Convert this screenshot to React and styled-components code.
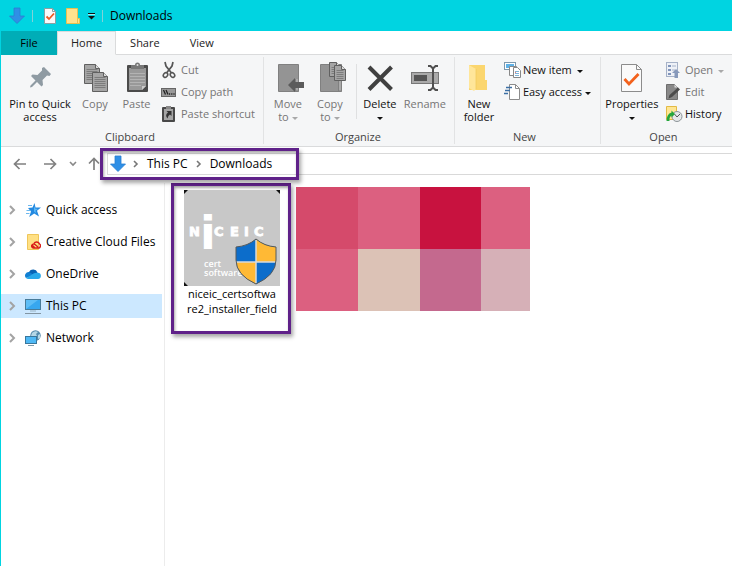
import React, { useState } from 'react';
import styled, { createGlobalStyle } from 'styled-components';

const GlobalStyle = createGlobalStyle`
    * {
        box-sizing: border-box;
    }

    body {
        margin: 0;
        background: #fff;
        color: #000;
        font-family: "Open Sans", "Noto Sans", sans-serif;
        font-size: 12px;
        line-height: 16px;
    }

    button {
        margin: 0;
        padding: 0;
        border: 0;
        background: none;
        color: inherit;
        font: inherit;
    }

    svg {
        display: block;
        flex: none;
    }
`;

const Window = styled.div`
    min-height: 100vh;
    display: flex;
    flex-direction: column;
    border-left: 1px solid #00d4e1;
    overflow: hidden;
`;

const TitleBar = styled.header`
    height: 31px;
    display: flex;
    align-items: center;
    padding-left: 8px;
    background: #00d4e1;
`;

const TitleDivider = styled.span`
    width: 1px;
    height: 12px;
    margin: 0 ${(p) => p.$after}px 0 7px;
    background: #80d2d8;
`;

const QuickButton = styled.button`
    margin-right: ${(p) => p.$gap || 0}px;
`;

const Title = styled.h1`
    margin: 0;
    font-size: 12px;
    font-weight: 400;
`;

const TabBar = styled.div`
    height: 24px;
    display: flex;
    font-size: 11px;
    border-bottom: 1px solid #dadbdc;
`;

const Tab = styled.button`
    height: 24px;
    min-width: 56px;
    padding: 0 13px;
    color: #222;
    border: 1px solid transparent;
    border-top: 0;
    ${(p) => p.$file && 'background: #00adb7; color: #000;'}
    ${(p) => p.$active && `
        background: #f5f6f7;
        border-color: #dadbdc;
        border-bottom-color: #f5f6f7;
        border-top: 1px solid #dadbdc;
    `}
`;

const Ribbon = styled.div`
    display: flex;
    padding: 2px 0;
    font-size: 11px;
    background: #f5f6f7;
    border-bottom: 1px solid #dadbdc;
`;

const Group = styled.section`
    flex: none;
    display: flex;
    flex-direction: column;
    padding: 0 ${(p) => p.$right}px 0 ${(p) => p.$left}px;
    border-right: ${(p) => (p.$last ? '0' : '1px solid #e2e3e4')};
`;

const GroupBody = styled.div`
    height: 72px;
    display: flex;
`;

const GroupLabel = styled.h2`
    margin: 0;
    color: #444;
    font-size: 11px;
    font-weight: 400;
    line-height: 15px;
    text-align: center;
`;

const BigButton = styled.button`
    width: ${(p) => p.$width}px;
    display: flex;
    flex-direction: column;
    align-items: center;
    gap: 3px;
    padding-top: 5px;
    line-height: 13px;
    white-space: nowrap;
    color: ${(p) => (p.disabled ? '#757575' : '#111')};
`;

const InnerDivider = styled.span`
    width: 1px;
    height: 55px;
    margin: 7px 2px 0 5px;
    background: #dfe0e1;
`;

const SmallColumn = styled.div`
    display: flex;
    flex-direction: column;
    padding-top: 2px;
    margin-left: ${(p) => p.$left}px;
`;

const SmallButton = styled.button`
    height: 22px;
    display: flex;
    align-items: center;
    gap: ${(p) => p.$gap || 4}px;
    white-space: nowrap;
    color: ${(p) => (p.disabled ? '#757575' : '#111')};
`;

const Caret = styled.span`
    display: inline-block;
    margin-left: ${(p) => p.$left || 0}px;
    vertical-align: middle;
    border: 3px solid transparent;
    border-top-color: currentColor;
    border-bottom: 0;
    opacity: ${(p) => (p.$dim ? 0.6 : 1)};
`;

const AddressRow = styled.div`
    height: 36px;
    display: flex;
    align-items: center;
    padding: 0 0 2px 12px;
`;

const NavButton = styled.button`
    margin-right: ${(p) => p.$gap}px;
`;

const AddressBar = styled.div`
    flex: 1;
    height: 22px;
    display: flex;
    border: 1px solid #d9d9d9;
    border-right: 0;
`;

const Breadcrumbs = styled.nav`
    position: relative;
    min-width: 185px;
    display: flex;
    align-items: center;
    padding-left: 2px;

    &::after {
        content: "";
        position: absolute;
        inset: -6px -6px -6px -8px;
        border: 3px solid #5f2189;
        box-shadow: 2px 3px 4px rgba(0, 0, 0, 0.35), inset 1px 2px 3px rgba(0, 0, 0, 0.35);
        pointer-events: none;
    }
`;

const Crumb = styled.button`
    margin: 0 8px;
`;

const CrumbToggle = styled.button`
    margin-left: 7px;
`;

const Main = styled.div`
    flex: 1;
    display: flex;
`;

const Sidebar = styled.nav`
    width: 164px;
    flex: none;
    display: flex;
    flex-direction: column;
    gap: 8px;
    padding: 15px 2px 15px 0;
    border-right: 1px solid #ececec;
`;

const SideItem = styled.button`
    height: 24px;
    display: flex;
    align-items: center;
    padding-left: 7px;
    white-space: nowrap;
    background: ${(p) => (p.$active ? '#cce8ff' : 'transparent')};

    span {
        margin-left: 5px;
    }
`;

const SideIcon = styled.svg`
    margin-left: 9px;
`;

const Files = styled.main`
    flex: 1;
    display: flex;
    align-items: flex-start;
    gap: 5px;
    padding-left: 6px;
`;

const FileTile = styled.button`
    width: 120px;
    min-height: 151px;
    flex: none;
    display: flex;
    flex-direction: column;
    align-items: center;
    padding: 4px 8px 4px 10px;
    font-size: 11px;
    line-height: 15px;
    border: 3px solid #5f2189;
    box-shadow: 2px 3px 4px rgba(0, 0, 0, 0.35), inset 1px 2px 3px rgba(0, 0, 0, 0.35);
`;

const Mosaic = styled.div`
    display: grid;
    grid-template-columns: 62px 62px 61px 49px;
    grid-auto-rows: 62px;
    margin-top: 4px;
`;

const Swatch = styled.div`
    background: ${(p) => p.$color};
`;

const DownArrow = () => (
    <svg width="16" height="18" viewBox="0 0 16 18">
        <path d="M5 1h6v8h4.500L8 16.500.500 9H5z" fill="#2f8fe6" stroke="#2a7fd0" strokeWidth=".8" />
    </svg>
);

const SmallDoc = () => (
    <svg width="12" height="16" viewBox="0 0 12 16">
        <path d="M.5.5h8l3 3v12H.5z" fill="#fafafa" stroke="#8ba0a3" />
        <path d="M8.500.5v3h3" fill="none" stroke="#8ba0a3" />
        <path d="M2.500 8.500l2.500 2.500 5-5.500" fill="none" stroke="#ee5a24" strokeWidth="1.800" />
    </svg>
);

const SmallFolder = () => (
    <svg width="14" height="16" viewBox="0 0 14 16">
        <path d="M.5.5h11v10h2v5H.5z" fill="#ffe28d" stroke="#e7c04f" />
        <path d="M11.500 10.500v5" stroke="#e7c04f" />
    </svg>
);

const Customize = () => (
    <svg width="8" height="8" viewBox="0 0 8 8">
        <path d="M1 1.500h7" stroke="#111" />
        <path d="M1 2.500h7" stroke="#fff" opacity=".6" />
        <path d="M1 4h7L4.500 7.500z" fill="#111" />
    </svg>
);

const PinIcon = () => (
    <svg width="32" height="32" viewBox="0 0 32 32">
        <path d="M18 6l2-1 7 7-1.500 2-2.500-.5-4.500 4.500.5 5-1.500 1.500-4.500-4.500L8 25l-2 .5.5-2 5-5L7 14l1.500-1.500 5 .5L18 8.500z" fill="#8f9ba3" />
    </svg>
);

const Page = ({ x, y, w = 15, h = 19 }) => (
    <g transform={`translate(${x} ${y})`}>
        <path d={`M.5.5h${w - 5}l4 4v${h - 5}H.5z`} fill="#a5a5a5" stroke="#606060" />
        <path d={`M${w - 4.5}.5v4h4`} fill="#ddd" stroke="#606060" />
        {[5, 7, 9, 11, 13, 15].filter((n) => n < h - 2).map((n) => (
            <path key={n} d={`M2.500 ${n + 0.5}h${w - 5}`} stroke="#7c7c7c" />
        ))}
    </g>
);

const CopyIcon = () => (
    <svg width="32" height="32" viewBox="0 0 32 32">
        <Page x={5} y={2} w={16} h={20} />
        <Page x={13} y={10} w={16} h={20} />
    </svg>
);

const PasteIcon = () => (
    <svg width="32" height="32" viewBox="0 0 32 32">
        <rect x="6" y="3" width="21" height="27" rx="1" fill="#4b4b4b" />
        <path d="M8 6h17v18l-4 4H8z" fill="#999" />
        <path d="M25 24h-4v4z" fill="#ccc" />
        <path d="M9 11.500h15M9 14.500h15M9 17.500h15M9 20.500h15M9 23.500h11" stroke="#b3b3b3" />
        <path d="M10 3h4a2.500 2.500 0 0 1 5 0h4v4H10z" fill="#777" />
        <circle cx="16.500" cy="3" r="1" fill="#ddd" />
    </svg>
);

const CutIcon = () => (
    <svg width="16" height="18" viewBox="0 0 16 18" fill="none" stroke="#555">
        <path d="M4 1l1 4 5.500 7M12 1l-1 4-5.500 7" strokeWidth="1.700" />
        <ellipse cx="4.500" cy="14" rx="2" ry="2.500" strokeWidth="1.600" transform="rotate(35 4.500 14)" />
        <ellipse cx="11.500" cy="14" rx="2" ry="2.500" strokeWidth="1.600" transform="rotate(-35 11.500 14)" />
    </svg>
);

const CopyPathIcon = () => (
    <svg width="16" height="16" viewBox="0 0 16 16">
        <rect x=".5" y="4.500" width="14" height="8" fill="#999" stroke="#666" />
        <path d="M2.500 6l2 4.500M5 6l2 4.500" stroke="#222" strokeWidth="1.300" />
        <path d="M8 10h1.200M10.200 10h1.200M12.400 10h1.200" stroke="#222" strokeWidth="1.300" />
    </svg>
);

const PasteShortcutIcon = () => (
    <svg width="16" height="16" viewBox="0 0 16 16">
        <rect x="1" y="1" width="13" height="15" rx="1" fill="#484848" />
        <rect x="3" y="3" width="9" height="11" fill="#a5a5a5" />
        <rect x="5" y="0" width="5" height="3" fill="#888" />
        <path d="M5.500 5h5v5L9 8.500q-2 1-2.500 4Q3.500 9 7 6.500z" fill="#333" />
    </svg>
);

const MoveIcon = () => (
    <svg width="32" height="32" viewBox="0 0 32 32">
        <path d="M6.500 2.500h20v27h-20z" fill="#949494" stroke="#808080" />
        <path d="M23.500 17v12h3V17" fill="#aaa" stroke="#808080" />
        <path d="M16 23l7-7v4h9v6h-9v4z" fill="#5b5b5b" />
    </svg>
);

const CopyToIcon = () => (
    <svg width="32" height="32" viewBox="0 0 32 32">
        <path d="M6.500 2.500h21v27h-21z" fill="#949494" stroke="#808080" />
        <path d="M24.500 17v12h3V17" fill="#aaa" stroke="#808080" />
        <Page x={15} y={0} w={12} h={15} />
        <Page x={20} y={3} w={12} h={16} />
    </svg>
);

const DeleteIcon = () => (
    <svg width="32" height="32" viewBox="0 0 32 32">
        <path d="M5 5l22.500 22.500M27.500 5L5 27.500" stroke="#404040" strokeWidth="4" />
    </svg>
);

const RenameIcon = () => (
    <svg width="32" height="32" viewBox="0 0 32 32">
        <rect x="2.500" y="10.500" width="27" height="11" fill="#aaa" stroke="#777" />
        <rect x="5" y="13" width="13" height="6" fill="#555" />
        <path d="M19 4h2.500L24 6.500 26.500 4H29M19 28h2.500l2.500-2.500 2.500 2.500H29M24 6v20" fill="none" stroke="#505050" strokeWidth="2" />
    </svg>
);

const NewFolderIcon = () => (
    <svg width="32" height="32" viewBox="0 0 32 32">
        <path d="M6 3h16v15h2v10H6z" fill="#fbd66f" />
        <path d="M6 3l7 4v20l-2 2-5-3z" fill="#ffe69a" />
        <path d="M13 7v20" stroke="#f0c85a" strokeWidth=".7" />
    </svg>
);

const NewItemIcon = () => (
    <svg width="17" height="16" viewBox="0 0 17 16">
        <rect x=".5" y=".5" width="11" height="7" fill="#fff" stroke="#7e98ac" />
        <rect x="2" y="2" width="8" height="4" fill="#5fb2e8" />
        <path d="M5.500 4.500h7v9h-7z" fill="#fff" stroke="#888" />
        <path d="M9.500 5.500h4l3 3v7h-7z" fill="#fff" stroke="#888" />
        <path d="M11 9.500h4M11 11.500h4M11 13.500h4" stroke="#7fb3d8" />
        <path d="M11 10.500h1" stroke="#e77" />
    </svg>
);

const EasyAccessIcon = () => (
    <svg width="17" height="16" viewBox="0 0 17 16">
        <path d="M5.500.5h6l4 4v11h-10z" fill="#fff" stroke="#8c8c8c" />
        <path d="M11.500.5v4h4" fill="none" stroke="#8c8c8c" />
        <path d="M2 3.500h6M1 6.500h5M0 9.500h4" stroke="#3c6fa5" strokeWidth="1.400" />
    </svg>
);

const PropertiesIcon = () => (
    <svg width="32" height="32" viewBox="0 0 32 32">
        <path d="M5.500 2.500h15l5 5v22h-20z" fill="#fafafa" stroke="#8c8c8c" />
        <path d="M20.500 2.500v5h5" fill="none" stroke="#8c8c8c" />
        <path d="M8.500 17l4.500 5 9.500-10" fill="none" stroke="#f3621d" strokeWidth="2.800" />
    </svg>
);

const OpenIcon = () => (
    <svg width="16" height="16" viewBox="0 0 16 16">
        <rect x="1.500" y=".5" width="11" height="14" fill="#eef1f7" stroke="#a6b2c8" />
        <path d="M3 3h3v2H3zM3 7h3v2H3zM3 11h3v2H3z" fill="#8094bb" />
        <path d="M7 4h4M7 8h3" stroke="#a6b2c8" />
        <path d="M11 7l4 4h-2v5H9.500v-5H7z" fill="#8799bb" />
    </svg>
);

const EditIcon = () => (
    <svg width="16" height="16" viewBox="0 0 16 16">
        <path d="M1.500.5h8l3 3v12h-11z" fill="#888" stroke="#6e6e6e" />
        <path d="M9.500.5v3h3z" fill="#ddd" />
        <path d="M3.500 14.500l1-3.500 8.500-7.500 2 2L7 13z" fill="#4b4b4b" />
    </svg>
);

const HistoryIcon = () => (
    <svg width="18" height="16" viewBox="0 0 18 16">
        <path d="M1.500.5h10v13h-10z" fill="#ffe693" stroke="#e3ba45" />
        <circle cx="12" cy="10.500" r="5" fill="#e5e8ea" stroke="#8c9397" />
        <path d="M9.500 8l2.500 3 3-3" stroke="#555" fill="none" />
        <path d="M1.500 15q0-7 5-8.500V4.500L10 8 6.500 11.500V9.500Q4 11 4.500 15z" fill="#25a63b" />
    </svg>
);

const BackIcon = ({ forward }) => (
    <svg width="14" height="12" viewBox="0 0 14 12" fill="none" stroke="#808080" strokeWidth="1.700">
        <path d={forward ? 'M1 6h11M7.500 1l5 5-5 5' : 'M13 6H2M6.500 1l-5 5 5 5'} />
    </svg>
);

const RecentIcon = () => (
    <svg width="8" height="6" viewBox="0 0 8 6" fill="none" stroke="#888" strokeWidth="1.600">
        <path d="M1 1l3 3 3-3" />
    </svg>
);

const UpIcon = () => (
    <svg width="12" height="14" viewBox="0 0 12 14" fill="none" stroke="#808080" strokeWidth="1.700">
        <path d="M6 13V2M1 6.500l5-5 5 5" />
    </svg>
);

const Chevron = ({ large }) => (
    <svg width={large ? 8 : 6} height={large ? 10 : 8} viewBox={large ? '-1 -1 8 10' : '0 0 6 8'} fill="none">
        <path
            d={large ? 'M1 0l4 4-4 4' : 'M1 1l3 3-3 3'}
            stroke={large ? '#a3a3a3' : '#777'}
            strokeWidth={large ? 2 : 1.6}
        />
    </svg>
);

const StarArt = () => (
    <>
        <path d="M9.500 1l1 4.500H16l-4 3.200 2 5.800-4.800-3-5 3.500 1.800-5.500L3 6l4.500-.5z" fill="#2389e0" />
        <path d="M9 4l1 2.500 3 .5-2.500 1.500L11 11 9 9.500z" fill="#5cb8f7" />
        <path d="M3 3.500h4M1.500 8.500h4M1 11.500h3.500" stroke="#6cb8ef" />
    </>
);

const CreativeCloudArt = () => (
    <>
        <path d="M2.500.5h11v15h-11z" fill="#ffe084" stroke="#efc65a" />
        <g transform="translate(1)">
            <path d="M8.500 13.500l-2-2M13 14H8a2 2 0 1 1 1-3.500l3 2.500M8 9.500a3 3 0 0 1 5.500.5 2.200 2.200 0 0 1-1.500 4" fill="none" stroke="#d91e18" strokeWidth="1.500" />
        </g>
    </>
);

const OneDriveArt = () => (
    <>
        <path d="M4 6a4.700 4.700 0 0 1 8.500.5l-2 4H3z" fill="#0863b5" />
        <path d="M4 6a3.600 3.600 0 0 0-3 6L9 9z" fill="#127fd2" />
        <path d="M1 12q4-2 7.500-4.500 1.500-1 4-.8a3.100 3.100 0 0 1 .5 6.200H3.500Q2 13 1 12z" fill="#28a8ea" />
    </>
);

const ThisPcArt = () => (
    <>
        <rect x=".5" y="1.500" width="15" height="10" fill="#5dbdf6" stroke="#487b99" />
        <path d="M1 11L13 2h2v9z" fill="#37a7ef" />
        <path d="M5 13h6" stroke="#9ab3c3" />
        <path d="M0 15.500h16" stroke="#8295a3" />
    </>
);

const NetworkArt = () => (
    <>
        <circle cx="10.500" cy="5.500" r="5.200" fill="#548aab" />
        <path d="M7 3q3-3 6-1l-2 2 1 2-3 2-3-2zM13 5l2-1v4l-2 1z" fill="#b5d7e6" />
        <rect x=".5" y="6.500" width="11" height="7" fill="#4eb8f5" stroke="#39779c" />
        <path d="M3 15.500h6" stroke="#7f9baa" />
    </>
);

const InstallerIcon = () => (
    <svg width="96" height="96" viewBox="0 0 96 96" role="img" aria-label="NICEIC cert software">
        <path d="M0 0h96v96H0z" fill="#111" />
        <path d="M4 0h88l4 4v92H4l-4-4V4z" fill="#c8c8c8" />
        <text y="46" fill="#fff" stroke="#fff" strokeWidth=".8" fontFamily="DejaVu Sans" fontWeight="700" fontSize="13">
            <tspan x="5">N</tspan>
            <tspan x="16" y="59" fontSize="46" strokeWidth="0">i</tspan>
            <tspan x="30" y="46">C</tspan>
            <tspan x="46">E</tspan>
            <tspan x="60">I</tspan>
            <tspan x="70">C</tspan>
        </text>
        <text fill="#fff" fontFamily="Open Sans" fontWeight="600" fontSize="9">
            <tspan x="20" y="77">cert</tspan>
            <tspan x="20" y="86">software</tspan>
        </text>
        <path d="M72 49q8 7 20 8v13q0 15-20 24-20-9-20-24V57q12-1 20-8z" fill="#0c6dcb" />
        <path d="M72 49q8 7 20 8v15H72zM52 72h20v22q-18-8-20-22z" fill="#ffb935" />
        <path d="M72 50v43M52 72h40" stroke="#d8dadb" strokeWidth="1.500" />
        <path d="M72 49q8 7 20 8v13q0 15-20 24-20-9-20-24V57q12-1 20-8z" fill="none" stroke="#555a5d" />
    </svg>
);

const places = [
    { name: 'Quick access', Art: StarArt },
    { name: 'Creative Cloud Files', Art: CreativeCloudArt },
    { name: 'OneDrive', Art: OneDriveArt },
    { name: 'This PC', Art: ThisPcArt },
    { name: 'Network', Art: NetworkArt },
];

const swatches = [
    '#d54a6b', '#dc6080', '#c8123f', '#dc6080',
    '#dc6080', '#dcc2b6', '#c4698e', '#d6b0b7',
];

export default function App() {
    const [tab, setTab] = useState('Home');
    const [place, setPlace] = useState('This PC');

    return (
        <Window>
            <GlobalStyle />
            <TitleBar>
                <DownArrow />
                <TitleDivider $after={11} />
                <QuickButton $gap={10} aria-label="Properties"><SmallDoc /></QuickButton>
                <QuickButton $gap={7} aria-label="New folder"><SmallFolder /></QuickButton>
                <QuickButton aria-label="Customize toolbar"><Customize /></QuickButton>
                <TitleDivider $after={7} />
                <Title>Downloads</Title>
            </TitleBar>

            <TabBar>
                <Tab $file>File</Tab>
                {['Home', 'Share', 'View'].map((name) => (
                    <Tab key={name} $active={tab === name} onClick={() => setTab(name)}>{name}</Tab>
                ))}
            </TabBar>

            <Ribbon>
                <Group $left={4} $right={8}>
                    <GroupBody>
                        <BigButton $width={70}><PinIcon /><span>Pin to Quick<br />access</span></BigButton>
                        <BigButton $width={40} disabled><CopyIcon />Copy</BigButton>
                        <BigButton $width={43} disabled><PasteIcon />Paste</BigButton>
                        <SmallColumn $left={3}>
                            <SmallButton disabled><CutIcon />Cut</SmallButton>
                            <SmallButton disabled><CopyPathIcon />Copy path</SmallButton>
                            <SmallButton disabled><PasteShortcutIcon />Paste shortcut</SmallButton>
                        </SmallColumn>
                    </GroupBody>
                    <GroupLabel>Clipboard</GroupLabel>
                </Group>

                <Group $left={3} $right={5}>
                    <GroupBody>
                        <BigButton $width={42} disabled><MoveIcon /><span>Move<br />to <Caret $dim /></span></BigButton>
                        <BigButton $width={42} disabled><CopyToIcon /><span>Copy<br />to <Caret $dim /></span></BigButton>
                        <InnerDivider />
                        <BigButton $width={42}><DeleteIcon /><span>Delete<br /><Caret /></span></BigButton>
                        <BigButton $width={48} disabled><RenameIcon />Rename</BigButton>
                    </GroupBody>
                    <GroupLabel>Organize</GroupLabel>
                </Group>

                <Group $left={3} $right={9}>
                    <GroupBody>
                        <BigButton $width={42}><NewFolderIcon /><span>New<br />folder</span></BigButton>
                        <SmallColumn $left={4}>
                            <SmallButton $gap={2}><NewItemIcon /><span>New item <Caret $left={2} /></span></SmallButton>
                            <SmallButton $gap={2}><EasyAccessIcon /><span>Easy access <Caret /></span></SmallButton>
                        </SmallColumn>
                    </GroupBody>
                    <GroupLabel>New</GroupLabel>
                </Group>

                <Group $left={2} $right={9} $last>
                    <GroupBody>
                        <BigButton $width={58}><PropertiesIcon /><span>Properties<br /><Caret /></span></BigButton>
                        <SmallColumn $left={4}>
                            <SmallButton disabled><OpenIcon /><span>Open <Caret $left={2} $dim /></span></SmallButton>
                            <SmallButton disabled><EditIcon />Edit</SmallButton>
                            <SmallButton $gap={2}><HistoryIcon />History</SmallButton>
                        </SmallColumn>
                    </GroupBody>
                    <GroupLabel>Open</GroupLabel>
                </Group>
            </Ribbon>

            <AddressRow>
                <NavButton $gap={16} aria-label="Back"><BackIcon /></NavButton>
                <NavButton $gap={12} aria-label="Forward"><BackIcon forward /></NavButton>
                <NavButton $gap={11} aria-label="Recent locations"><RecentIcon /></NavButton>
                <NavButton $gap={7} aria-label="Up"><UpIcon /></NavButton>
                <AddressBar>
                    <Breadcrumbs aria-label="Location">
                        <DownArrow />
                        <CrumbToggle aria-label="Locations"><Chevron /></CrumbToggle>
                        <Crumb>This PC</Crumb>
                        <Chevron />
                        <Crumb>Downloads</Crumb>
                    </Breadcrumbs>
                </AddressBar>
            </AddressRow>

            <Main>
                <Sidebar aria-label="Places">
                    {places.map(({ name, Art }) => (
                        <SideItem key={name} $active={place === name} onClick={() => setPlace(name)}>
                            <Chevron large />
                            <SideIcon width="16" height="16" viewBox="0 0 16 16"><Art /></SideIcon>
                            <span>{name}</span>
                        </SideItem>
                    ))}
                </Sidebar>
                <Files>
                    <FileTile>
                        <InstallerIcon />
                        <span>niceic_certsoftwa<br />re2_installer_field</span>
                    </FileTile>
                    <Mosaic>
                        {swatches.map((color, i) => <Swatch key={i} $color={color} />)}
                    </Mosaic>
                </Files>
            </Main>
        </Window>
    );
}
